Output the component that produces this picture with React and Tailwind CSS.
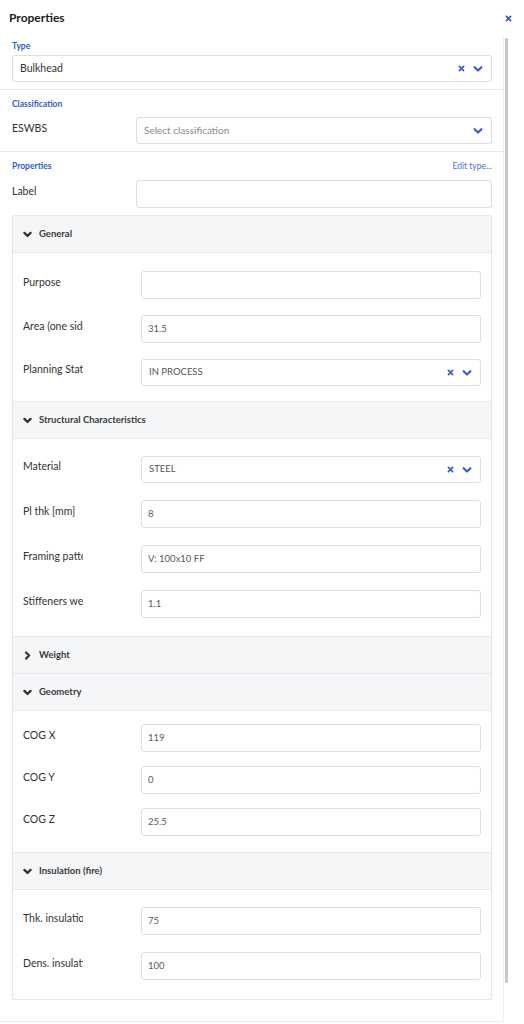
import React from "react";

const BLUE = "text-[#2f5ec4]";

function ChevronDown({ className = "", sw = "2.1" }) {
  return (
    <svg viewBox="0 0 10 10" className={className}>
      <path d="M1.6 3.2 L5 6.6 L8.4 3.2" fill="none" stroke="currentColor" strokeWidth={sw} strokeLinecap="round" strokeLinejoin="round" />
    </svg>
  );
}

function ChevronRight({ className = "", sw = "2.1" }) {
  return (
    <svg viewBox="0 0 10 10" className={className}>
      <path d="M3.4 1.6 L6.8 5 L3.4 8.4" fill="none" stroke="currentColor" strokeWidth={sw} strokeLinecap="round" strokeLinejoin="round" />
    </svg>
  );
}

function Times({ className = "" }) {
  return (
    <svg viewBox="0 0 10 10" className={className}>
      <path d="M2 2 L8 8 M8 2 L2 8" fill="none" stroke="currentColor" strokeWidth="2.4" strokeLinecap="round" />
    </svg>
  );
}

function Select({ value, placeholder, clearable, small }) {
  return (
    <div className="h-[27px] border border-[#dcdee2] rounded-[3px] bg-white flex items-center pl-[7px] pr-[8px]">
      <span className={value ? (small ? "text-[9.5px] text-[#555]" : "text-[10.5px] text-[#333]") : "text-[10px] text-[#8a8a8a]"}>
        {value || placeholder}
      </span>
      <div className={`ml-auto flex items-center gap-[8px] ${BLUE}`}>
        {clearable && <Times className="w-[7px] h-[7px]" />}
        <ChevronDown className="w-[10px] h-[10px]" />
      </div>
    </div>
  );
}

function Input({ value }) {
  return (
    <div className="h-[28px] border border-[#dcdee2] rounded-[3px] bg-white flex items-center px-[6px]">
      <span className="text-[9.5px] text-[#5a5a5a]">{value}</span>
    </div>
  );
}

function Row({ label, children }) {
  return (
    <div className="grid grid-cols-[118px_1fr] items-center">
      <span className="w-[60px] overflow-hidden whitespace-nowrap text-[10.5px] text-[#333] -mt-[5px]">{label}</span>
      {children}
    </div>
  );
}

function Section({ title, open = true, body }) {
  return (
    <div>
      <div className="h-[37px] bg-[#f5f6f8] border-b border-[#e6e8eb] flex items-center pl-[10px] gap-[7px] text-[#333]">
        {open ? <ChevronDown className="w-[9px] h-[9px]" sw="2.5" /> : <ChevronRight className="w-[9px] h-[9px]" sw="2.5" />}
        <span className="text-[9.5px] font-bold text-[#3a3a3a]">{title}</span>
      </div>
      {body}
    </div>
  );
}

export default function App() {
  return (
    <div className="w-[524px] h-[1024px] bg-white font-['Lato','Open_Sans',sans-serif] overflow-hidden">
      <div className="h-[36px] flex items-center pl-[9px] pr-[12px]">
        <span className="text-[12px] font-bold text-[#222]">Properties</span>
        <Times className={`ml-auto w-[7px] h-[7px] ${BLUE}`} />
      </div>
      <div className="flex">
        <div className="w-[504px] h-[986px] border-r border-b border-[#ececec]">
          {/* Type */}
          <div className="pl-[12px] pr-[11px] pt-[2px] pb-[7px] border-b border-[#e8e8e8]">
            <div className={`h-[16px] flex items-center text-[8.5px] font-bold ${BLUE}`}>Type</div>
            <div className="mt-[1px]">
              <Select value="Bulkhead" clearable />
            </div>
          </div>
          {/* Classification */}
          <div className="pl-[12px] pr-[11px] pt-[6px] pb-[7px] border-b border-[#e8e8e8]">
            <div className={`h-[16px] flex items-center text-[8.5px] font-bold ${BLUE}`}>Classification</div>
            <div className="mt-[5px] grid grid-cols-[124px_1fr] items-center">
              <span className="text-[10.5px] text-[#333] -mt-[4px]">ESWBS</span>
              <Select placeholder="Select classification" />
            </div>
          </div>
          {/* Properties */}
          <div className="pl-[12px] pr-[11px] pt-[6px]">
            <div className="h-[16px] flex items-center">
              <span className={`text-[8.5px] font-bold ${BLUE}`}>Properties</span>
              <span className="ml-auto text-[8.5px] text-[#4a72c9]">Edit type...</span>
            </div>
            <div className="mt-[6px] grid grid-cols-[124px_1fr] items-center">
              <span className="text-[10.5px] text-[#333] -mt-[4px]">Label</span>
              <div className="h-[28px] border border-[#dcdee2] rounded-[3px]" />
            </div>
            <div className="mt-[7px] border border-[#e3e5e8] rounded-[2px] overflow-hidden">
              <Section
                title="General"
                body={
                  <div className="px-[10px] pt-[18px] pb-[15px] flex flex-col gap-[16px] border-b border-[#e6e8eb]">
                    <Row label="Purpose"><Input value="" /></Row>
                    <Row label="Area (one side)"><Input value="31.5" /></Row>
                    <Row label="Planning Status"><Select value="IN PROCESS" clearable small /></Row>
                  </div>
                }
              />
              <Section
                title="Structural Characteristics"
                body={
                  <div className="px-[10px] pt-[17px] pb-[18px] flex flex-col gap-[17px] border-b border-[#e6e8eb]">
                    <Row label="Material"><Select value="STEEL" clearable small /></Row>
                    <Row label="Pl thk [mm]"><Input value="8" /></Row>
                    <Row label="Framing pattern"><Input value="V: 100x10 FF" /></Row>
                    <Row label="Stiffeners weight"><Input value="1.1" /></Row>
                  </div>
                }
              />
              <Section title="Weight" open={false} body={null} />
              <Section
                title="Geometry"
                body={
                  <div className="px-[10px] pt-[13px] pb-[16px] flex flex-col gap-[14px] border-b border-[#e6e8eb]">
                    <Row label="COG X"><Input value="119" /></Row>
                    <Row label="COG Y"><Input value="0" /></Row>
                    <Row label="COG Z"><Input value="25.5" /></Row>
                  </div>
                }
              />
              <Section
                title="Insulation (fire)"
                body={
                  <div className="px-[10px] pt-[17px] pb-[19px] flex flex-col gap-[17px]">
                    <Row label="Thk. insulation"><Input value="75" /></Row>
                    <Row label="Dens. insulation"><Input value="100" /></Row>
                  </div>
                }
              />
            </div>
          </div>
        </div>
        <div className="w-[20px] pl-[1px] pt-[2px]">
          <div className="w-[3px] h-[945px] bg-[#c6c6c6] rounded-full" />
        </div>
      </div>
    </div>
  );
}
